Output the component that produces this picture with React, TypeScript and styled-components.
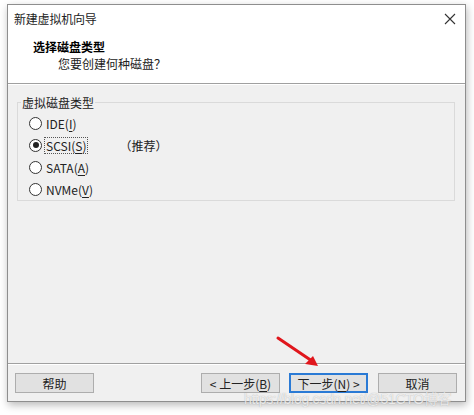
import React from "react";
import styled, { createGlobalStyle } from "styled-components";

const GlobalStyle = createGlobalStyle`
  html, body {
    margin: 0;
    padding: 0;
    background: #ffffff;
  }
  body {
    font-family: "Noto Sans CJK SC", "Noto Sans", sans-serif;
    font-size: 12px;
    color: #1a1a1a;
  }
`;

const DISK_TYPES = [
  { id: "ide", label: "IDE", key: "I" },
  { id: "scsi", label: "SCSI", key: "S", note: "（推荐）" },
  { id: "sata", label: "SATA", key: "A" },
  { id: "nvme", label: "NVMe", key: "V" },
];

const Page = styled.div`
  position: relative;
  width: 474px;
  height: 415px;
  padding: 4px 0 0 7px;
  box-sizing: border-box;
  overflow: hidden;
`;

const Window = styled.div`
  width: 459px;
  height: 398px;
  box-sizing: border-box;
  border: 1px solid #8e8e8e;
  background: #f0f0f0;
  display: flex;
  flex-direction: column;
  box-shadow: 1px 3px 8px rgba(0, 0, 0, 0.28);
`;

const Header = styled.div`
  background: #ffffff;
  height: 78px;
  display: flex;
  flex-direction: column;
  border-bottom: 1px solid #a0a0a0;
  box-shadow: 0 1px 0 #ffffff;
`;

const TitleBar = styled.div`
  height: 27px;
  display: flex;
  align-items: center;
  justify-content: space-between;
  padding: 0 8px 0 6px;
`;

const Caption = styled.span`
  font-size: 12px;
  color: #222;
  letter-spacing: -0.2px;
`;

const CloseIcon = styled.svg`
  width: 12px;
  height: 12px;
  margin-right: 1px;
`;

const Heading = styled.div`
  padding: 6px 0 0 25px;
  font-size: 12px;
  font-weight: 700;
  color: #000;
  line-height: 17px;
`;

const SubHeading = styled.div`
  padding-left: 50px;
  font-size: 12px;
  color: #222;
  line-height: 17px;
`;

const Body = styled.div`
  flex: 1;
  padding: 10px 10px 0 9px;
  border-bottom: 1px solid #a0a0a0;
  box-shadow: 0 1px 0 #ffffff;
`;

const GroupBox = styled.fieldset`
  margin: 0;
  height: 107px;
  box-sizing: border-box;
  border: 1px solid #dadada;
  padding: 1px 0 0 11px;
  display: flex;
  flex-direction: column;
`;

const Legend = styled.legend`
  padding: 0 1px;
  margin-left: -8px;
  font-size: 12px;
  color: #222;
`;

const Option = styled.label`
  display: flex;
  align-items: center;
  height: 22px;
  gap: 2px;
`;

const Dot = styled.span<{ checked?: boolean }>`
  width: 13px;
  height: 13px;
  border: 1px solid #333;
  border-radius: 50%;
  background: #fff;
  box-sizing: border-box;
  display: flex;
  align-items: center;
  justify-content: center;
  &::after {
    content: "";
    width: 6px;
    height: 6px;
    border-radius: 50%;
    background: ${(p) => (p.checked ? "#222" : "transparent")};
  }
`;

const OptionText = styled.span<{ focused?: boolean }>`
  padding: 0 1px;
  line-height: 15px;
  font-size: 12px;
  color: #222;
  border: 1px dotted ${(p) => (p.focused ? "#555" : "transparent")};
  u {
    text-underline-offset: 2px;
  }
`;

const Note = styled.span`
  margin-left: 29px;
  font-size: 12px;
  color: #222;
`;

const Footer = styled.div`
  height: 36px;
  display: flex;
  align-items: center;
  padding: 0 8px 0 7px;
  margin-top: 1px;
`;

const Button = styled.button<{ primary?: boolean }>`
  width: 79px;
  height: 20px;
  padding: 0;
  font-family: inherit;
  font-size: 12px;
  color: #222;
  background: #e1e1e1;
  border: 1px solid ${(p) => (p.primary ? "#2a7ad5" : "#adadad")};
  box-shadow: ${(p) => (p.primary ? "inset 0 0 0 1px #2a7ad5" : "none")};
  margin-left: ${(p) => (p.primary ? "9px" : "0")};
  u {
    text-underline-offset: 2px;
  }
`;

const Spacer = styled.div`
  flex: 1;
`;

const CancelButton = styled(Button)`
  margin-left: 10px;
`;

const Arrow = styled.svg`
  position: absolute;
  left: 272px;
  top: 332px;
  width: 52px;
  height: 38px;
`;

const Watermark = styled.div`
  position: absolute;
  left: 244px;
  top: 388px;
  font-family: "Liberation Sans", "Noto Sans CJK SC", sans-serif;
  font-size: 14px;
  color: rgba(255, 255, 255, 0.75);
  text-shadow: 0 0 1px rgba(120, 120, 120, 0.6);
  letter-spacing: -0.3px;
`;

export default function App() {
  return (
    <>
      <GlobalStyle />
      <Page>
        <Window>
          <Header>
            <TitleBar>
              <Caption>新建虚拟机向导</Caption>
              <CloseIcon viewBox="0 0 12 12">
                <path d="M1 1 L11 11 M11 1 L1 11" stroke="#333" strokeWidth="1.1" />
              </CloseIcon>
            </TitleBar>
            <Heading>选择磁盘类型</Heading>
            <SubHeading>您要创建何种磁盘？</SubHeading>
          </Header>
          <Body>
            <GroupBox>
              <Legend>虚拟磁盘类型</Legend>
              {DISK_TYPES.map((item) => (
                <Option key={item.id}>
                  <Dot checked={item.id === "scsi"} />
                  <OptionText focused={item.id === "scsi"}>
                    {item.label}(<u>{item.key}</u>)
                  </OptionText>
                  {item.note && <Note>{item.note}</Note>}
                </Option>
              ))}
            </GroupBox>
          </Body>
          <Footer>
            <Button>帮助</Button>
            <Spacer />
            <Button>
              &lt; 上一步(<u>B</u>)
            </Button>
            <Button primary>
              下一步(<u>N</u>) &gt;
            </Button>
            <CancelButton>取消</CancelButton>
          </Footer>
        </Window>
        <Arrow viewBox="0 0 52 38">
          <path d="M6 6 L40 29" stroke="#e0161c" strokeWidth="3" strokeLinecap="round" />
          <path d="M46 34 L33 32 L41 24 Z" fill="#e0161c" />
        </Arrow>
        <Watermark>https://blog.csdn.net/@51CTO博客</Watermark>
      </Page>
    </>
  );
}
